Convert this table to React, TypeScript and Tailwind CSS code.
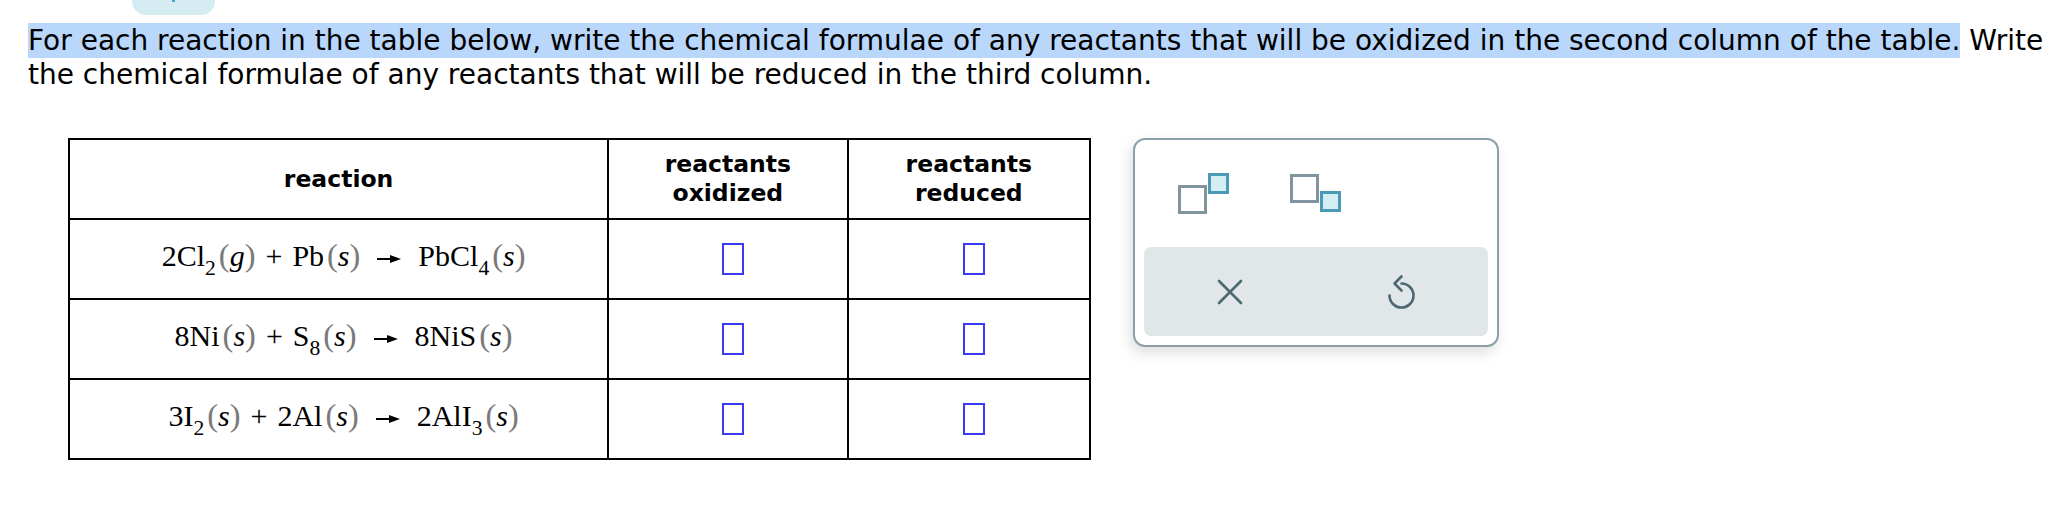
import React from "react";

type Row = { key: string; eq: React.ReactNode };

function Phase({ s }: { s: string }) {
  return (
    <span className="ml-[3px]">
      <span className="text-[1.08em] text-[#7a7a7a]">(</span>
      <i>{s}</i>
      <span className="text-[1.08em] text-[#7a7a7a]">)</span>
    </span>
  );
}

function Sub({ children }: { children: React.ReactNode }) {
  return <sub className="bottom-[-0.42em] text-[0.72em]">{children}</sub>;
}

function Plus() {
  return <span className="mx-[10px]">+</span>;
}

function Arrow() {
  return (
    <svg className="mx-[17px] inline-block align-middle" width="24" height="10" viewBox="0 0 24 10">
      <line x1="0" y1="5" x2="15" y2="5" stroke="#000" strokeWidth="2" />
      <polygon points="13,1 24,5 13,9" fill="#000" />
    </svg>
  );
}

const rows: Row[] = [
  {
    key: "cl",
    eq: (
      <>
        2Cl<Sub>2</Sub>
        <Phase s="g" />
        <Plus />
        Pb
        <Phase s="s" />
        <Arrow />
        PbCl<Sub>4</Sub>
        <Phase s="s" />
      </>
    ),
  },
  {
    key: "ni",
    eq: (
      <>
        8Ni
        <Phase s="s" />
        <Plus />
        S<Sub>8</Sub>
        <Phase s="s" />
        <Arrow />
        8NiS
        <Phase s="s" />
      </>
    ),
  },
  {
    key: "al",
    eq: (
      <>
        3I<Sub>2</Sub>
        <Phase s="s" />
        <Plus />
        2Al
        <Phase s="s" />
        <Arrow />
        2AlI<Sub>3</Sub>
        <Phase s="s" />
      </>
    ),
  },
];

function AnswerBox() {
  return <span className="inline-block h-[32px] w-[22px] border-2 border-[#3a3af2] align-middle" />;
}

function SuperscriptIcon() {
  return (
    <svg width="52" height="42" viewBox="0 0 52 42">
      <rect x="1.5" y="13.5" width="26" height="26" fill="#fff" stroke="#7f949d" strokeWidth="3" />
      <rect x="31.5" y="1.5" width="18" height="18" fill="#d5eef4" stroke="#4b9bb6" strokeWidth="3" />
    </svg>
  );
}

function SubscriptIcon() {
  return (
    <svg width="52" height="40" viewBox="0 0 52 40">
      <rect x="1.5" y="1.5" width="26" height="26" fill="#fff" stroke="#7f949d" strokeWidth="3" />
      <rect x="31.5" y="18.5" width="18" height="18" fill="#d5eef4" stroke="#4b9bb6" strokeWidth="3" />
    </svg>
  );
}

export default function App() {
  return (
    <div className="min-h-[510px] bg-white font-['DejaVu_Sans',Verdana,sans-serif] text-black">
      <div className="relative ml-[132px] h-[15px] w-[83px] rounded-b-[14px] bg-[#d4ecf2]">
        <span className="absolute left-[40px] top-0 h-[2px] w-[3px] bg-[#4aa3c8]" />
      </div>

      <p className="mt-[9px] whitespace-nowrap pl-[28px] text-[28px] leading-[34px]">
        <span className="bg-[#b9d6fb] pb-[1px] pt-[1px]">
          For each reaction in the table below, write the chemical formulae of any reactants that will be oxidized in the second column of the table.
        </span>{" "}
        Write
        <br />
        the chemical formulae of any reactants that will be reduced in the third column.
      </p>

      <div className="mt-[46px] flex items-start gap-[42px] pl-[68px]">
        <table className="w-[1023px] border-collapse border-2 border-black">
          <thead>
            <tr className="h-[80px] text-[23.5px] font-bold leading-[29px]">
              <th className="w-[540px] border-2 border-black">reaction</th>
              <th className="w-[240px] border-2 border-black">
                reactants
                <br />
                oxidized
              </th>
              <th className="w-[243px] border-2 border-black">
                reactants
                <br />
                reduced
              </th>
            </tr>
          </thead>
          <tbody>
            {rows.map((r) => (
              <tr key={r.key} className="h-[80px]">
                <td className="border-2 border-black pb-[8px] pl-[10px] text-center font-['Liberation_Serif','Times_New_Roman',serif] text-[30px] whitespace-nowrap">
                  {r.eq}
                </td>
                <td className="border-2 border-black pl-[10px] text-center">
                  <AnswerBox />
                </td>
                <td className="border-2 border-black pl-[10px] text-center">
                  <AnswerBox />
                </td>
              </tr>
            ))}
          </tbody>
        </table>

        <div className="flex h-[209px] w-[366px] flex-col rounded-[12px] border-2 border-[#8ca0a9] bg-white px-[9px] pb-[9px] shadow-[-3px_6px_14px_rgba(0,0,0,0.13)]">
          <div className="grid flex-1 grid-cols-3 items-center">
            <div className="flex justify-center pl-[6px]">
              <SuperscriptIcon />
            </div>
            <div className="flex justify-center">
              <SubscriptIcon />
            </div>
            <div />
          </div>
          <div className="grid h-[89px] grid-cols-2 items-center rounded-[7px] bg-[#e1e6e9]">
            <div className="flex justify-center">
              <svg width="26" height="26" viewBox="0 0 26 26">
                <path d="M2 2 L24 24 M24 2 L2 24" stroke="#4d6873" strokeWidth="2.6" strokeLinecap="round" />
              </svg>
            </div>
            <div className="flex justify-center">
              <svg width="30" height="34" viewBox="0 0 30 34">
                <path
                  d="M14.5 8.5 A12 12 0 1 1 2.5 20.5"
                  fill="none"
                  stroke="#4d6873"
                  strokeWidth="2.6"
                  strokeLinecap="round"
                />
                <path
                  d="M14.5 1.5 L7.5 8.5 L14.5 15.5"
                  fill="none"
                  stroke="#4d6873"
                  strokeWidth="2.6"
                  strokeLinecap="round"
                  strokeLinejoin="round"
                />
              </svg>
            </div>
          </div>
        </div>
      </div>
    </div>
  );
}
